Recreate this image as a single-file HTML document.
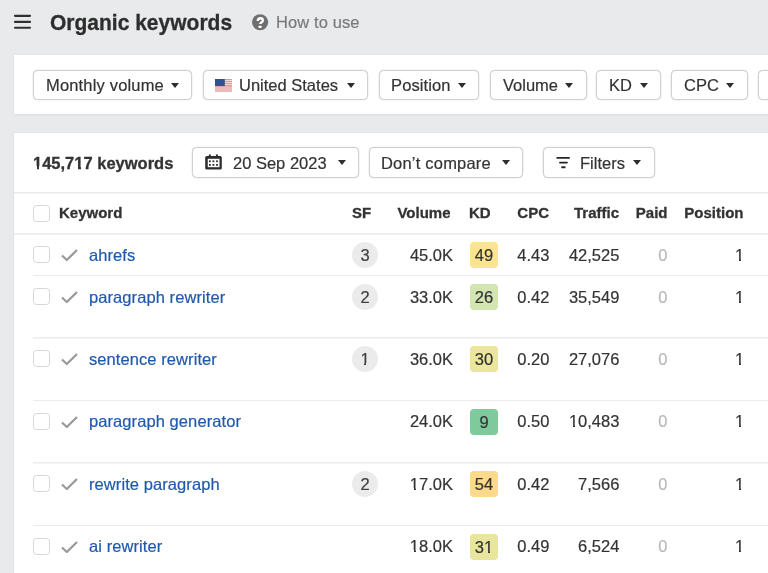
<!DOCTYPE html>
<html><head><meta charset="utf-8">
<style>
*{margin:0;padding:0;box-sizing:border-box}
html,body{width:768px;height:573px;overflow:hidden}
body{background:#e9eaec;font-family:"Liberation Sans",sans-serif;color:#333;position:relative}
.a{position:absolute;white-space:nowrap;line-height:20px;will-change:transform}
.t{font-size:16.5px;-webkit-text-stroke:0.2px currentColor}
.b{font-weight:bold;-webkit-text-stroke:0.3px currentColor}
.panel{position:absolute;background:#fff;box-shadow:0 0 0 0.5px rgba(0,0,0,.04),0 1px 2px rgba(0,0,0,.045)}
.btn{position:absolute;height:30.5px;border:1px solid #d0d0d0;border-radius:4.5px;background:#fff;box-shadow:0 0 0 0.3px #dadada}
.caret{position:absolute;width:0;height:0;border-left:4.6px solid transparent;border-right:4.6px solid transparent;border-top:5.8px solid #2e2e2e}
.hline{position:absolute;height:1px;background:#e6e6e6}
.cb{position:absolute;width:16.5px;height:16.5px;border:1.4px solid #d6d6d6;border-radius:3.5px;background:#fff}
.chk{position:absolute}
.kw{color:#2159ac;letter-spacing:0.08px}
.r{text-align:right}
.sf{--bg:#ebebeb;will-change:transform;position:absolute;width:26px;height:26px;border-radius:13px;background:#ebebeb;text-align:center;line-height:26px;font-size:16.5px;color:#404040;-webkit-text-stroke:0.2px currentColor}
.kd{will-change:transform;position:absolute;width:28px;height:26px;border-radius:4px;text-align:center;line-height:26px;font-size:16.5px;color:#333;-webkit-text-stroke:0.2px currentColor}
.z{color:#b8b8b8}
.o1{position:relative}
.o1::before,.o1::after{content:'';position:absolute;bottom:0.18em;height:0.125em;background:var(--bg,#fff)}
.o1::before{left:0.03em;width:0.213em}
.o1::after{left:0.348em;width:0.21em}
.b .o1::before{left:0.02em;width:0.2em;height:0.22em;bottom:0.12em}
.b .o1::after{left:0.382em;width:0.19em;height:0.22em;bottom:0.12em}
</style></head><body>
<!-- title row -->
<svg class="a" style="left:13px;top:13px" width="20" height="18" viewBox="0 0 20 18"><g stroke="#303030" stroke-width="2.1" stroke-linecap="round"><line x1="2" y1="2.85" x2="17" y2="2.85"/><line x1="2" y1="8.9" x2="17" y2="8.9"/><line x1="2" y1="14.7" x2="17" y2="14.7"/></g></svg>
<div class="a b" style="left:50px;top:11.2px;font-size:21px;line-height:24px;color:#2e2e2e;transform:scaleY(1.08);transform-origin:0 19.3px;-webkit-text-stroke:0.3px #2e2e2e">Organic keywords</div>
<svg class="a" style="left:251px;top:14px" width="18" height="18" viewBox="0 0 18 18"><circle cx="9.1" cy="8.3" r="8.05" fill="#6f6f6f"/><path d="M6.75 6.9 C6.75 5.2 7.8 4.25 9.3 4.25 C10.9 4.25 11.85 5.2 11.85 6.4 C11.85 7.5 11.1 8 10.3 8.5 C9.5 9 9.2 9.4 9.2 10" fill="none" stroke="#fff" stroke-width="2.3"/><rect x="7.6" y="11.8" width="3" height="2.2" rx="0.4" fill="#fff"/></svg>
<div class="a t" style="left:275.8px;top:11.7px;color:#7a7a7a;letter-spacing:0.1px">How to use</div>

<!-- panel 1 -->
<div class="panel" style="left:14px;top:55px;width:760px;height:59px"></div>
<div class="btn" style="left:33px;top:69.6px;width:159.2px"></div>
<div class="a t" style="left:45.6px;top:74.7px;letter-spacing:0.17px">Monthly volume</div>
<div class="caret" style="left:171px;top:82.5px"></div>

<div class="btn" style="left:202.6px;top:69.6px;width:165.6px"></div>
<svg class="a" style="left:215px;top:78.6px" width="17" height="13.3" viewBox="0 0 17 13.3"><rect width="17" height="13.3" fill="#ebb8bb"/><rect width="17" height="7.1" fill="#fbeeee"/><g fill="#e08a90"><rect y="0.1" width="17" height="1.1"/><rect y="2.1" width="17" height="1.1"/><rect y="4.1" width="17" height="1.1"/><rect y="6.1" width="17" height="1.1"/></g><rect width="9.8" height="7.1" fill="#354f8d"/></svg>
<div class="a t" style="left:239px;top:74.7px">United States</div>
<div class="caret" style="left:346.5px;top:82.5px"></div>

<div class="btn" style="left:378.6px;top:69.6px;width:100.8px"></div>
<div class="a t" style="left:390.6px;top:74.7px;letter-spacing:0.12px">Position</div>
<div class="caret" style="left:458px;top:82.5px"></div>

<div class="btn" style="left:490.1px;top:69.6px;width:96.8px"></div>
<div class="a t" style="left:503px;top:74.7px">Volume</div>
<div class="caret" style="left:564.5px;top:82.5px"></div>

<div class="btn" style="left:596.2px;top:69.6px;width:64.5px"></div>
<div class="a t" style="left:609px;top:74.7px">KD</div>
<div class="caret" style="left:639.5px;top:82.5px"></div>

<div class="btn" style="left:671.2px;top:69.6px;width:76.4px"></div>
<div class="a t" style="left:684px;top:74.7px">CPC</div>
<div class="caret" style="left:726px;top:82.5px"></div>

<div class="btn" style="left:757.7px;top:69.6px;width:60px"></div>

<!-- panel 2 -->
<div class="panel" style="left:14px;top:133px;width:760px;height:450px"></div>
<div class="a b" style="left:33.3px;top:152.7px;font-size:16.5px"><span class="o1">1</span>45,7<span class="o1">1</span>7 keywords</div>

<div class="btn" style="left:192.3px;top:147.3px;width:166.5px"></div>
<svg class="a" style="left:204px;top:153px" width="20" height="18" viewBox="0 0 20 18"><rect x="1.2" y="2.9" width="16.6" height="13.6" rx="1.6" fill="#2e2e2e"/><rect x="3.75" y="5.8" width="11.75" height="8.4" fill="#fff"/><g fill="#2e2e2e"><rect x="4.95" y="7.4" width="1.8" height="1.8"/><rect x="8.5" y="7.4" width="1.8" height="1.8"/><rect x="12.1" y="7.4" width="1.8" height="1.8"/><rect x="4.95" y="11" width="1.8" height="1.8"/><rect x="8.5" y="11" width="1.8" height="1.8"/><rect x="12.1" y="11" width="1.8" height="1.8"/><rect x="4.85" y="1.2" width="2" height="3" rx="1"/><rect x="12" y="1.2" width="2" height="3" rx="1"/></g></svg>
<div class="a t" style="left:232.8px;top:153px">20 Sep 2023</div>
<div class="caret" style="left:337.5px;top:160.2px"></div>

<div class="btn" style="left:369.1px;top:147.3px;width:153.6px"></div>
<div class="a t" style="left:381.3px;top:153px;letter-spacing:0.2px">Don’t compare</div>
<div class="caret" style="left:501.5px;top:160.2px"></div>

<div class="btn" style="left:542.5px;top:147.3px;width:112.2px"></div>
<svg class="a" style="left:555px;top:156px" width="17" height="14" viewBox="0 0 17 14"><g stroke="#252525" stroke-width="1.9" stroke-linecap="round"><line x1="2.3" y1="1.9" x2="14" y2="1.9"/><line x1="5" y1="6.6" x2="11.9" y2="6.6"/><line x1="7.1" y1="11.3" x2="9.7" y2="11.3"/></g></svg>
<div class="a t" style="left:579.5px;top:153px">Filters</div>
<div class="caret" style="left:632.5px;top:160.2px"></div>

<div class="hline" style="left:14px;top:192px;width:760px;height:2px;background:linear-gradient(#e9e9ea 50%,#f3f3f4 50%)"></div>

<!-- header -->
<div class="cb" style="left:33px;top:205px"></div>
<div class="a b" style="left:58.7px;top:203.4px;font-size:15px">Keyword</div>
<div class="a b" style="left:352px;top:203.4px;font-size:15px">SF</div>
<div class="a b r" style="left:350px;width:100.5px;top:203.4px;font-size:15px">Volume</div>
<div class="a b" style="left:469.3px;top:203.4px;font-size:15px">KD</div>
<div class="a b r" style="left:500px;width:49px;top:203.4px;font-size:15px">CPC</div>
<div class="a b r" style="left:560px;width:59px;top:203.4px;font-size:15px">Traffic</div>
<div class="a b r" style="left:620px;width:47.5px;top:203.4px;font-size:15px">Paid</div>
<div class="a b r" style="left:670px;width:73.5px;top:203.4px;font-size:15px">Position</div>

<div class="hline" style="left:14px;top:233px;width:760px;height:2px;background:linear-gradient(#efeff1 50%,#f0f0f2 50%)"></div>

<div id="rows">
<div class="cb" style="left:33px;top:246.3px"></div>
<svg class="chk" style="left:60px;top:248.0px" width="19" height="14" viewBox="0 0 19 14"><path d="M2 7.5 L6.8 12 L17 2" fill="none" stroke="#9a9a9a" stroke-width="2.3" stroke-linejoin="round"/></svg>
<div class="a t kw" style="left:89.4px;top:244.7px">ahrefs</div>
<div class="sf" style="left:352px;top:242.0px">3</div>
<div class="a t r" style="left:380px;width:73px;top:244.7px">45.0K</div>
<div class="kd" style="left:469.5px;top:242.0px;background:#fae48f;--bg:#fae48f">49</div>
<div class="a t r" style="left:500px;width:49.4px;top:244.7px">4.43</div>
<div class="a t r" style="left:555px;width:64.4px;top:244.7px">42,525</div>
<div class="a t r z" style="left:640px;width:27.5px;top:244.7px">0</div>
<div class="a t r" style="left:700px;width:44.3px;top:244.7px"><span class="o1">1</span></div>
<div class="hline" style="left:33px;top:275px;width:740px;background:#eaebee"></div>
<div class="cb" style="left:33px;top:288.1px"></div>
<svg class="chk" style="left:60px;top:289.8px" width="19" height="14" viewBox="0 0 19 14"><path d="M2 7.5 L6.8 12 L17 2" fill="none" stroke="#9a9a9a" stroke-width="2.3" stroke-linejoin="round"/></svg>
<div class="a t kw" style="left:89.4px;top:286.5px">paragraph rewriter</div>
<div class="sf" style="left:352px;top:283.8px">2</div>
<div class="a t r" style="left:380px;width:73px;top:286.5px">33.0K</div>
<div class="kd" style="left:469.5px;top:283.8px;background:#d3e5b1;--bg:#d3e5b1">26</div>
<div class="a t r" style="left:500px;width:49.4px;top:286.5px">0.42</div>
<div class="a t r" style="left:555px;width:64.4px;top:286.5px">35,549</div>
<div class="a t r z" style="left:640px;width:27.5px;top:286.5px">0</div>
<div class="a t r" style="left:700px;width:44.3px;top:286.5px"><span class="o1">1</span></div>
<div class="hline" style="left:33px;top:337px;width:740px;height:2px;background:linear-gradient(#ededf0 50%,#f4f4f6 50%)"></div>
<div class="cb" style="left:33px;top:350.4px"></div>
<svg class="chk" style="left:60px;top:352.1px" width="19" height="14" viewBox="0 0 19 14"><path d="M2 7.5 L6.8 12 L17 2" fill="none" stroke="#9a9a9a" stroke-width="2.3" stroke-linejoin="round"/></svg>
<div class="a t kw" style="left:89.4px;top:348.8px">sentence rewriter</div>
<div class="sf" style="left:352px;top:346.1px"><span class="o1">1</span></div>
<div class="a t r" style="left:380px;width:73px;top:348.8px">36.0K</div>
<div class="kd" style="left:469.5px;top:346.1px;background:#ebe69b;--bg:#ebe69b">30</div>
<div class="a t r" style="left:500px;width:49.4px;top:348.8px">0.20</div>
<div class="a t r" style="left:555px;width:64.4px;top:348.8px">27,076</div>
<div class="a t r z" style="left:640px;width:27.5px;top:348.8px">0</div>
<div class="a t r" style="left:700px;width:44.3px;top:348.8px"><span class="o1">1</span></div>
<div class="hline" style="left:33px;top:400px;width:740px;background:#eaebee"></div>
<div class="cb" style="left:33px;top:413.0px"></div>
<svg class="chk" style="left:60px;top:414.7px" width="19" height="14" viewBox="0 0 19 14"><path d="M2 7.5 L6.8 12 L17 2" fill="none" stroke="#9a9a9a" stroke-width="2.3" stroke-linejoin="round"/></svg>
<div class="a t kw" style="left:89.4px;top:411.4px">paragraph generator</div>
<div class="a t r" style="left:380px;width:73px;top:411.4px">24.0K</div>
<div class="kd" style="left:469.5px;top:408.7px;background:#7fca9c;--bg:#7fca9c">9</div>
<div class="a t r" style="left:500px;width:49.4px;top:411.4px">0.50</div>
<div class="a t r" style="left:555px;width:64.4px;top:411.4px"><span class="o1">1</span>0,483</div>
<div class="a t r z" style="left:640px;width:27.5px;top:411.4px">0</div>
<div class="a t r" style="left:700px;width:44.3px;top:411.4px"><span class="o1">1</span></div>
<div class="hline" style="left:33px;top:462px;width:740px;height:2px;background:linear-gradient(#ededf0 50%,#f4f4f6 50%)"></div>
<div class="cb" style="left:33px;top:475.2px"></div>
<svg class="chk" style="left:60px;top:476.9px" width="19" height="14" viewBox="0 0 19 14"><path d="M2 7.5 L6.8 12 L17 2" fill="none" stroke="#9a9a9a" stroke-width="2.3" stroke-linejoin="round"/></svg>
<div class="a t kw" style="left:89.4px;top:473.6px">rewrite paragraph</div>
<div class="sf" style="left:352px;top:470.9px">2</div>
<div class="a t r" style="left:380px;width:73px;top:473.6px"><span class="o1">1</span>7.0K</div>
<div class="kd" style="left:469.5px;top:470.9px;background:#fdd98c;--bg:#fdd98c">54</div>
<div class="a t r" style="left:500px;width:49.4px;top:473.6px">0.42</div>
<div class="a t r" style="left:555px;width:64.4px;top:473.6px">7,566</div>
<div class="a t r z" style="left:640px;width:27.5px;top:473.6px">0</div>
<div class="a t r" style="left:700px;width:44.3px;top:473.6px"><span class="o1">1</span></div>
<div class="hline" style="left:33px;top:525px;width:740px;background:#eaebee"></div>
<div class="cb" style="left:33px;top:538.0px"></div>
<svg class="chk" style="left:60px;top:539.7px" width="19" height="14" viewBox="0 0 19 14"><path d="M2 7.5 L6.8 12 L17 2" fill="none" stroke="#9a9a9a" stroke-width="2.3" stroke-linejoin="round"/></svg>
<div class="a t kw" style="left:89.4px;top:536.4px">ai rewriter</div>
<div class="a t r" style="left:380px;width:73px;top:536.4px"><span class="o1">1</span>8.0K</div>
<div class="kd" style="left:469.5px;top:533.7px;background:#e8e69c;--bg:#e8e69c">3<span class="o1">1</span></div>
<div class="a t r" style="left:500px;width:49.4px;top:536.4px">0.49</div>
<div class="a t r" style="left:555px;width:64.4px;top:536.4px">6,524</div>
<div class="a t r z" style="left:640px;width:27.5px;top:536.4px">0</div>
<div class="a t r" style="left:700px;width:44.3px;top:536.4px"><span class="o1">1</span></div>
</div>
</body></html>
